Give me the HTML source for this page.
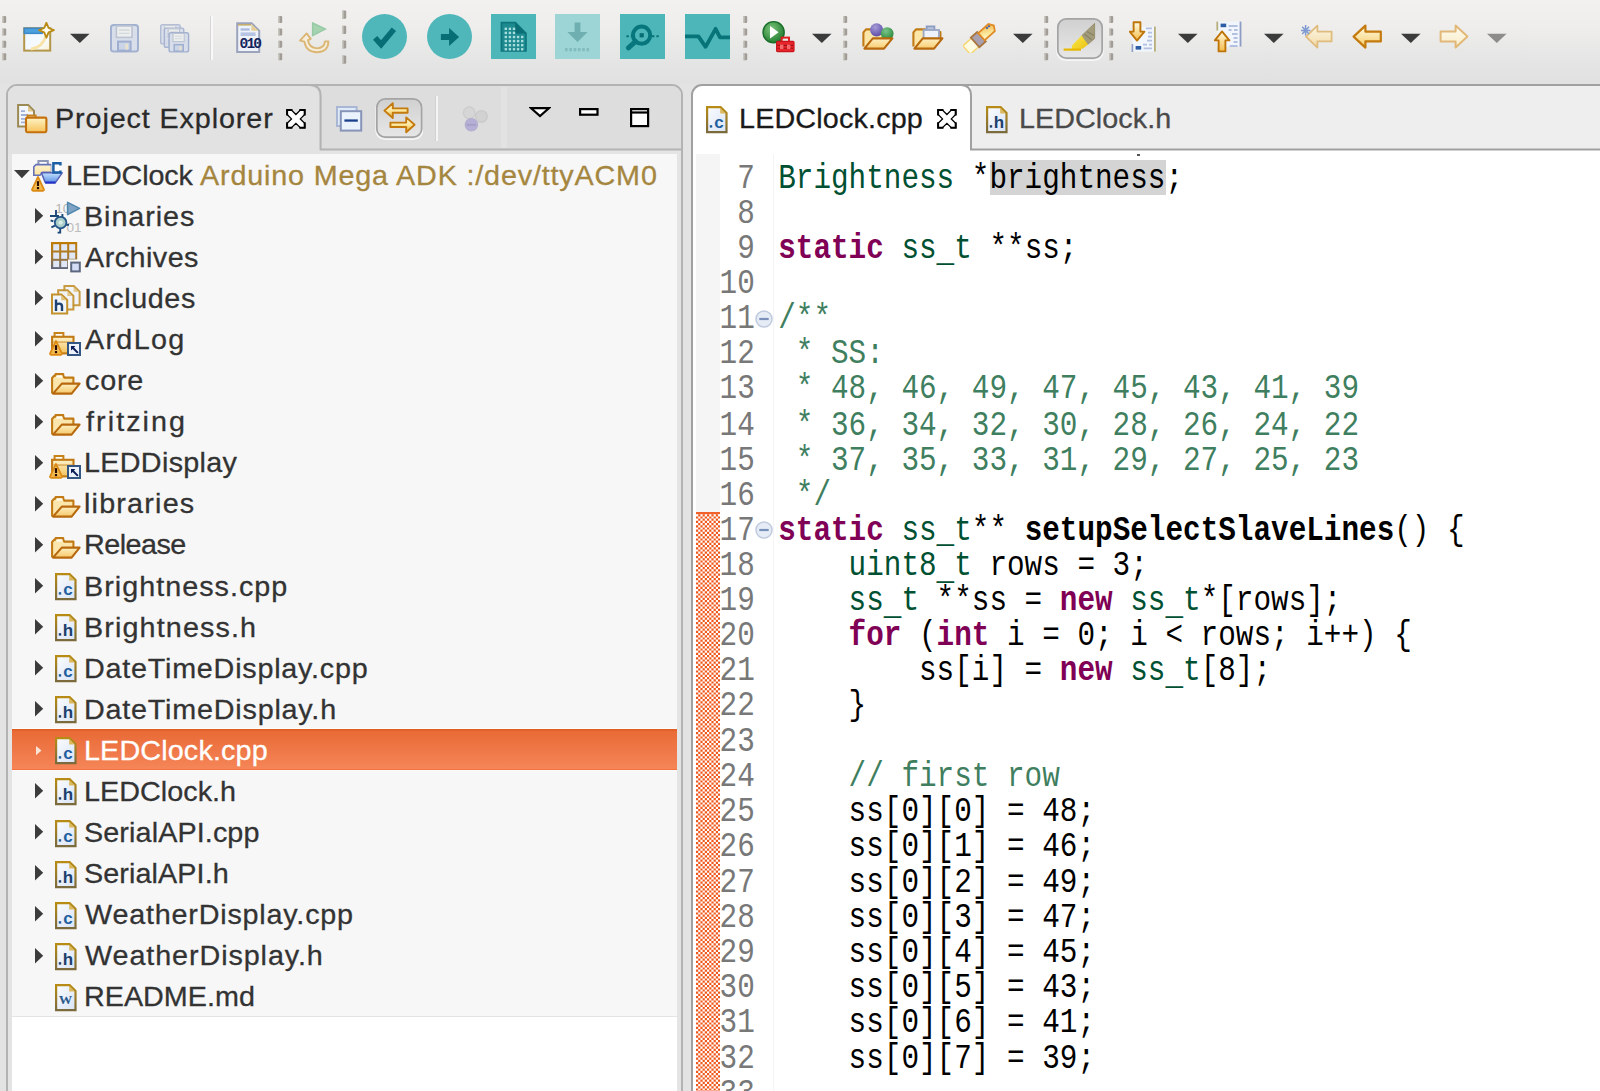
<!DOCTYPE html>
<html><head><meta charset="utf-8"><title>Eclipse</title>
<style>
html,body{margin:0;padding:0}
html{width:1600px;height:1091px;overflow:hidden}
body{width:1600px;height:1091px;overflow:hidden;position:relative;background:#e3e3e3;font-family:"Liberation Sans",sans-serif}
.abs,svg,.t{position:absolute}
.t{font-family:"Liberation Sans",sans-serif;font-size:27.5px;line-height:1;white-space:pre;transform-origin:0 0;transform:scaleX(1.045);-webkit-text-stroke:.28px}
#toolbar{position:absolute;left:-20px;top:-20px;width:1640px;height:104px;background:linear-gradient(#f2f1f0 0,#f2f1f0 22px,#efeeed 45px,#e9e9e8 65px,#e4e4e4 85px,#e1e1e1 104px)}
.code{position:absolute;font-family:"Liberation Mono",monospace;font-size:29.333px;line-height:30.085px;white-space:pre;transform-origin:0 0;transform:scaleY(1.17);color:#000}
.k{color:#7f0055;font-weight:bold}
.ty{color:#005032}
.c{color:#3f7f5f}
.f{font-weight:bold}
.ln{color:#787878}
.u{position:relative;top:2.7px}
#wrap{position:absolute;left:0;top:0;width:1600px;height:1091px;background:#e3e3e3;overflow:hidden}
#in{position:absolute;left:0;top:0;width:1600px;height:1091px}
</style></head><body><div id="wrap"><div id="in">

<div id="toolbar"></div>
<svg style="left:2.00px;top:0.00px" width="5" height="84" viewBox="0 0 5 84" ><rect x="0" y="16" width="4.2" height="7" rx="1" fill="#a19d96"/><rect x="0" y="16" width="1.6" height="7" fill="#c9c6c0"/><rect x="0" y="28.4" width="4.2" height="7" rx="1" fill="#a19d96"/><rect x="0" y="28.4" width="1.6" height="7" fill="#c9c6c0"/><rect x="0" y="40.8" width="4.2" height="7" rx="1" fill="#a19d96"/><rect x="0" y="40.8" width="1.6" height="7" fill="#c9c6c0"/><rect x="0" y="53.2" width="4.2" height="7" rx="1" fill="#a19d96"/><rect x="0" y="53.2" width="1.6" height="7" fill="#c9c6c0"/></svg>
<svg style="left:278.00px;top:0.00px" width="5" height="84" viewBox="0 0 5 84" ><rect x="0" y="16" width="4.2" height="7" rx="1" fill="#a19d96"/><rect x="0" y="16" width="1.6" height="7" fill="#c9c6c0"/><rect x="0" y="28.4" width="4.2" height="7" rx="1" fill="#a19d96"/><rect x="0" y="28.4" width="1.6" height="7" fill="#c9c6c0"/><rect x="0" y="40.8" width="4.2" height="7" rx="1" fill="#a19d96"/><rect x="0" y="40.8" width="1.6" height="7" fill="#c9c6c0"/><rect x="0" y="53.2" width="4.2" height="7" rx="1" fill="#a19d96"/><rect x="0" y="53.2" width="1.6" height="7" fill="#c9c6c0"/></svg>
<svg style="left:743.00px;top:0.00px" width="5" height="84" viewBox="0 0 5 84" ><rect x="0" y="16" width="4.2" height="7" rx="1" fill="#a19d96"/><rect x="0" y="16" width="1.6" height="7" fill="#c9c6c0"/><rect x="0" y="28.4" width="4.2" height="7" rx="1" fill="#a19d96"/><rect x="0" y="28.4" width="1.6" height="7" fill="#c9c6c0"/><rect x="0" y="40.8" width="4.2" height="7" rx="1" fill="#a19d96"/><rect x="0" y="40.8" width="1.6" height="7" fill="#c9c6c0"/><rect x="0" y="53.2" width="4.2" height="7" rx="1" fill="#a19d96"/><rect x="0" y="53.2" width="1.6" height="7" fill="#c9c6c0"/></svg>
<svg style="left:843.00px;top:0.00px" width="5" height="84" viewBox="0 0 5 84" ><rect x="0" y="16" width="4.2" height="7" rx="1" fill="#a19d96"/><rect x="0" y="16" width="1.6" height="7" fill="#c9c6c0"/><rect x="0" y="28.4" width="4.2" height="7" rx="1" fill="#a19d96"/><rect x="0" y="28.4" width="1.6" height="7" fill="#c9c6c0"/><rect x="0" y="40.8" width="4.2" height="7" rx="1" fill="#a19d96"/><rect x="0" y="40.8" width="1.6" height="7" fill="#c9c6c0"/><rect x="0" y="53.2" width="4.2" height="7" rx="1" fill="#a19d96"/><rect x="0" y="53.2" width="1.6" height="7" fill="#c9c6c0"/></svg>
<svg style="left:1044.00px;top:0.00px" width="5" height="84" viewBox="0 0 5 84" ><rect x="0" y="16" width="4.2" height="7" rx="1" fill="#a19d96"/><rect x="0" y="16" width="1.6" height="7" fill="#c9c6c0"/><rect x="0" y="28.4" width="4.2" height="7" rx="1" fill="#a19d96"/><rect x="0" y="28.4" width="1.6" height="7" fill="#c9c6c0"/><rect x="0" y="40.8" width="4.2" height="7" rx="1" fill="#a19d96"/><rect x="0" y="40.8" width="1.6" height="7" fill="#c9c6c0"/><rect x="0" y="53.2" width="4.2" height="7" rx="1" fill="#a19d96"/><rect x="0" y="53.2" width="1.6" height="7" fill="#c9c6c0"/></svg>
<svg style="left:1109.00px;top:0.00px" width="5" height="84" viewBox="0 0 5 84" ><rect x="0" y="16" width="4.2" height="7" rx="1" fill="#a19d96"/><rect x="0" y="16" width="1.6" height="7" fill="#c9c6c0"/><rect x="0" y="28.4" width="4.2" height="7" rx="1" fill="#a19d96"/><rect x="0" y="28.4" width="1.6" height="7" fill="#c9c6c0"/><rect x="0" y="40.8" width="4.2" height="7" rx="1" fill="#a19d96"/><rect x="0" y="40.8" width="1.6" height="7" fill="#c9c6c0"/><rect x="0" y="53.2" width="4.2" height="7" rx="1" fill="#a19d96"/><rect x="0" y="53.2" width="1.6" height="7" fill="#c9c6c0"/></svg>
<svg style="left:342.00px;top:0.00px" width="5" height="84" viewBox="0 0 5 84" ><rect x="0" y="10.6" width="4.2" height="8.2" rx="1" fill="#a19d96"/><rect x="0" y="10.6" width="1.6" height="8.2" fill="#c9c6c0"/><rect x="0" y="25.8" width="4.2" height="8.2" rx="1" fill="#a19d96"/><rect x="0" y="25.8" width="1.6" height="8.2" fill="#c9c6c0"/><rect x="0" y="40.4" width="4.2" height="8.2" rx="1" fill="#a19d96"/><rect x="0" y="40.4" width="1.6" height="8.2" fill="#c9c6c0"/><rect x="0" y="55.6" width="4.2" height="8.2" rx="1" fill="#a19d96"/><rect x="0" y="55.6" width="1.6" height="8.2" fill="#c9c6c0"/></svg>
<svg style="left:22.00px;top:22.00px" width="33" height="31" viewBox="0 0 33 31" ><defs><linearGradient id="g1" x1="0" y1="0" x2="1" y2="1"><stop offset="0" stop-color="#eef6ff"/><stop offset=".7" stop-color="#f6fbff"/><stop offset="1" stop-color="#fdf0c8"/></linearGradient></defs><rect x="2.2" y="6.2" width="26" height="22.4" fill="url(#g1)" stroke="#b3964a" stroke-width="2"/><rect x="2.2" y="6.2" width="18" height="5.2" fill="#4aa0dc" stroke="#3a86c8" stroke-width="1.4"/><path d="M9 27 Q20 26 24 14" fill="none" stroke="#f8e4a8" stroke-width="3"/><path d="M24.4 0.8 L26.6 6 L31.8 8.2 L26.6 10.4 L24.4 15.6 L22.2 10.4 L17 8.2 L22.2 6 Z" fill="#fffdf0" stroke="#b98a14" stroke-width="1.9" stroke-linejoin="round"/></svg>
<svg style="left:70.00px;top:33.00px" width="20" height="11" viewBox="0 0 20 11" ><path d="M0 .8 H19.6 L9.8 10 Z" fill="#3b3b3b"/></svg>
<svg style="left:109.00px;top:23.00px" width="32" height="30" viewBox="0 0 32 30" ><g transform="translate(1,1) scale(1.0)" opacity="1.0"><rect x="1" y="1" width="27" height="26.6" rx="2.6" fill="#d8deea" stroke="#a3b1d0" stroke-width="2"/><rect x="6.4" y="2" width="15.6" height="11.4" fill="#ecefee" stroke="#bcc4d2" stroke-width="1.6"/><path d="M9 6 H19.4 M9 9.4 H19.4" stroke="#d3d8dc" stroke-width="1.4"/><rect x="8" y="17.6" width="12.6" height="9" fill="#ccd5e6" stroke="#9eadd0" stroke-width="2"/><rect x="15.4" y="19.6" width="2.6" height="6" fill="#e9e2cc"/></g></svg>
<svg style="left:159.00px;top:23.00px" width="33" height="31" viewBox="0 0 33 31" ><g transform="translate(1,1) scale(0.72)" opacity="0.8"><rect x="1" y="1" width="27" height="26.6" rx="2.6" fill="#d8deea" stroke="#a3b1d0" stroke-width="2"/><rect x="6.4" y="2" width="15.6" height="11.4" fill="#ecefee" stroke="#bcc4d2" stroke-width="1.6"/><path d="M9 6 H19.4 M9 9.4 H19.4" stroke="#d3d8dc" stroke-width="1.4"/><rect x="8" y="17.6" width="12.6" height="9" fill="#ccd5e6" stroke="#9eadd0" stroke-width="2"/><rect x="15.4" y="19.6" width="2.6" height="6" fill="#e9e2cc"/></g><g transform="translate(4.6,4.4) scale(0.72)" opacity="0.9"><rect x="1" y="1" width="27" height="26.6" rx="2.6" fill="#d8deea" stroke="#a3b1d0" stroke-width="2"/><rect x="6.4" y="2" width="15.6" height="11.4" fill="#ecefee" stroke="#bcc4d2" stroke-width="1.6"/><path d="M9 6 H19.4 M9 9.4 H19.4" stroke="#d3d8dc" stroke-width="1.4"/><rect x="8" y="17.6" width="12.6" height="9" fill="#ccd5e6" stroke="#9eadd0" stroke-width="2"/><rect x="15.4" y="19.6" width="2.6" height="6" fill="#e9e2cc"/></g><g transform="translate(9.4,9) scale(0.72)" opacity="1.0"><rect x="1" y="1" width="27" height="26.6" rx="2.6" fill="#d8deea" stroke="#a3b1d0" stroke-width="2"/><rect x="6.4" y="2" width="15.6" height="11.4" fill="#ecefee" stroke="#bcc4d2" stroke-width="1.6"/><path d="M9 6 H19.4 M9 9.4 H19.4" stroke="#d3d8dc" stroke-width="1.4"/><rect x="8" y="17.6" width="12.6" height="9" fill="#ccd5e6" stroke="#9eadd0" stroke-width="2"/><rect x="15.4" y="19.6" width="2.6" height="6" fill="#e9e2cc"/></g></svg>
<div class="abs" style="left:210px;top:16px;width:1.2px;height:44px;background:#d6d6d6;"></div>
<div class="abs" style="left:211.2px;top:16px;width:2px;height:44px;background:#f8f8f8;"></div>
<svg style="left:236.00px;top:22.00px" width="28" height="32" viewBox="0 0 28 32" ><path d="M1.2 1.2 H15.6 L23.2 8.6 V30 H1.2 Z" fill="#eef2fa" stroke="#9ba4bc" stroke-width="2"/><path d="M2 2 H15 V3.6 H2Z" fill="#c4ad6c"/><path d="M15.4 2 V8.8 H22.4 Z" fill="#e6cf94"/><rect x="4.6" y="6.4" width="9" height="2.2" fill="#a9b8dc"/><rect x="4.6" y="10.4" width="15" height="3.6" fill="#b7c3e2"/><text x="3.6" y="26.4" font-family="Liberation Mono" font-weight="bold" font-size="14.6" letter-spacing="-1.9" fill="#14245c">010</text></svg>
<svg style="left:298.00px;top:21.00px" width="33" height="33" viewBox="0 0 33 33" ><path d="M14.6 2 L27.4 8 L14.6 14.6 Z" fill="#a5d3b0" stroke="#97c9a4" stroke-width="1.4"/><path d="M2 19.6 L8.6 12.4 L12.8 17.8 L10 19.2 Q11 27 19 27.4 Q26.4 27 27 20.4 L30.4 20.4 Q30.4 30.6 19 31.2 Q8 31 6.4 20.6 Z" fill="#f5eedc" stroke="#dcb674" stroke-width="1.9" stroke-linejoin="round"/></svg>
<svg style="left:361.00px;top:12.50px" width="47" height="47" viewBox="0 0 47 47" ><circle cx="23.5" cy="23.5" r="22.5" fill="#4fb7ba"/><g transform="translate(23.5,23.5)"><path d="M-9.4 1.4 L-3.4 8 L9.4 -7.2" fill="none" stroke="#066e74" stroke-width="5.6"/></g></svg>
<svg style="left:425.50px;top:12.50px" width="47" height="47" viewBox="0 0 47 47" ><circle cx="23.5" cy="23.5" r="22.5" fill="#4fb7ba"/><g transform="translate(23.5,23.5)"><path d="M-8.6 -2.6 H-0.4 V-8.6 L9.6 0.4 L-0.4 9.4 V3.4 H-8.6 Z" fill="#066e74"/></g></svg>
<svg style="left:491.00px;top:13.50px" width="45" height="45" viewBox="0 0 45 45" ><rect width="45" height="45" fill="#4db6b9"/><path d="M10.4 8.6 H24.4 L35 19.4 V37 H10.4 Z" fill="#1d8a8f" stroke="#0d767c" stroke-width="1.6"/><path d="M24.2 8.8 V19.6 H34.8 Z" fill="#0a6e74"/><rect x="13.6" y="13.6" width="2.4" height="2.4" fill="#a6dcdc"/><rect x="17.7" y="13.6" width="2.4" height="2.4" fill="#a6dcdc"/><rect x="21.8" y="13.6" width="2.4" height="2.4" fill="#a6dcdc"/><rect x="13.6" y="17.7" width="2.4" height="2.4" fill="#a6dcdc"/><rect x="17.7" y="17.7" width="2.4" height="2.4" fill="#a6dcdc"/><rect x="21.8" y="17.7" width="2.4" height="2.4" fill="#a6dcdc"/><rect x="13.6" y="21.8" width="2.4" height="2.4" fill="#a6dcdc"/><rect x="17.7" y="21.8" width="2.4" height="2.4" fill="#a6dcdc"/><rect x="21.8" y="21.8" width="2.4" height="2.4" fill="#a6dcdc"/><rect x="25.9" y="21.8" width="2.4" height="2.4" fill="#a6dcdc"/><rect x="30.0" y="21.8" width="2.4" height="2.4" fill="#a6dcdc"/><rect x="13.6" y="25.9" width="2.4" height="2.4" fill="#a6dcdc"/><rect x="17.7" y="25.9" width="2.4" height="2.4" fill="#a6dcdc"/><rect x="21.8" y="25.9" width="2.4" height="2.4" fill="#a6dcdc"/><rect x="25.9" y="25.9" width="2.4" height="2.4" fill="#a6dcdc"/><rect x="30.0" y="25.9" width="2.4" height="2.4" fill="#a6dcdc"/><rect x="13.6" y="30.0" width="2.4" height="2.4" fill="#a6dcdc"/><rect x="17.7" y="30.0" width="2.4" height="2.4" fill="#a6dcdc"/><rect x="21.8" y="30.0" width="2.4" height="2.4" fill="#a6dcdc"/><rect x="25.9" y="30.0" width="2.4" height="2.4" fill="#a6dcdc"/><rect x="30.0" y="30.0" width="2.4" height="2.4" fill="#a6dcdc"/><rect x="13.6" y="34.1" width="2.4" height="2.4" fill="#a6dcdc"/><rect x="17.7" y="34.1" width="2.4" height="2.4" fill="#a6dcdc"/><rect x="21.8" y="34.1" width="2.4" height="2.4" fill="#a6dcdc"/><rect x="25.9" y="34.1" width="2.4" height="2.4" fill="#a6dcdc"/><rect x="30.0" y="34.1" width="2.4" height="2.4" fill="#a6dcdc"/></svg>
<svg style="left:555.40px;top:13.50px" width="45" height="45" viewBox="0 0 45 45" ><rect width="45" height="45" fill="#9dd4d5"/><path d="M19.6 8.4 H25.4 V18 H32.6 L22.5 28 L12.4 18 H19.6 Z" fill="#6fafb2"/><path d="M10 35.6 H35.4" stroke="#82bcbf" stroke-width="3.4" stroke-dasharray="2.6 1.7"/></svg>
<svg style="left:620.00px;top:13.50px" width="45" height="45" viewBox="0 0 45 45" ><rect width="45" height="45" fill="#4db6b9"/><circle cx="21.6" cy="21.2" r="8.6" fill="none" stroke="#07777d" stroke-width="4"/><rect x="19.6" y="19.2" width="4.2" height="4.2" fill="#066e74"/><path d="M15.6 27.4 L8.4 33.8" stroke="#07777d" stroke-width="5" stroke-linecap="round"/><path d="M6.4 22.2 H11.6 M32 22.2 H40" stroke="#0a7379" stroke-width="2" stroke-dasharray="2.4 2"/></svg>
<svg style="left:684.70px;top:13.50px" width="45" height="45" viewBox="0 0 45 45" ><rect width="45" height="45" fill="#4db6b9"/><path d="M0 22.4 H13.4 L20.6 32.8 L30.6 14.8 L35 23.4 H45" fill="none" stroke="#07747a" stroke-width="3.8" stroke-linejoin="round"/></svg>
<svg style="left:761.00px;top:20.00px" width="35" height="33" viewBox="0 0 35 33" ><defs><radialGradient id="g2" cx=".4" cy=".35" r=".7"><stop offset="0" stop-color="#7cc47c"/><stop offset="1" stop-color="#1c7a2c"/></radialGradient></defs><circle cx="12.6" cy="12.2" r="10.6" fill="url(#g2)" stroke="#1a6e2a" stroke-width="1.4"/><path d="M9 6 L17.6 12.2 L9 18.4 Z" fill="#fff"/><rect x="20.6" y="17.6" width="7.4" height="4.4" fill="none" stroke="#e02020" stroke-width="2"/><rect x="15.6" y="21.4" width="17.4" height="10.2" rx="1" fill="#e8242a" stroke="#c8141c" stroke-width="1.2"/><path d="M16.6 25.4 H32 M16.6 28.2 H32" stroke="#a01018" stroke-width="1.1"/><rect x="19" y="24.6" width="3.4" height="4.4" fill="#f46a6a"/><rect x="26" y="24.6" width="3.4" height="4.4" fill="#f46a6a"/></svg>
<svg style="left:812.00px;top:33.00px" width="20" height="11" viewBox="0 0 20 11" ><path d="M0 .8 H19.6 L9.8 10 Z" fill="#3b3b3b"/></svg>
<svg style="left:861.50px;top:22.00px" width="34" height="30" viewBox="0 0 34 30" ><defs><linearGradient id="g5" x1="0" y1="0" x2="0" y2="1"><stop offset="0" stop-color="#fdf0c4"/><stop offset="1" stop-color="#f8cc70"/></linearGradient></defs><path d="M1.4 24.6 V10.4 L4 7.4 H13 L15.4 10 H28.4 V17" fill="#fbe6a8" stroke="#c27a14" stroke-width="2.1" stroke-linejoin="round"/><defs><radialGradient id="g3" cx=".4" cy=".3" r=".7"><stop offset="0" stop-color="#a79cd8"/><stop offset="1" stop-color="#5f4fa8"/></radialGradient><radialGradient id="g4" cx=".4" cy=".3" r=".7"><stop offset="0" stop-color="#7cc48c"/><stop offset="1" stop-color="#2c8a3c"/></radialGradient></defs><circle cx="14.6" cy="7.8" r="6.6" fill="url(#g3)"/><circle cx="25.2" cy="11.6" r="6.4" fill="url(#g4)"/><path d="M2.4 26.6 L10.8 16.4 H30.4 L22 26.6 Z" fill="url(#g5)" stroke="#b8690e" stroke-width="2.1" stroke-linejoin="round"/></svg>
<svg style="left:912.00px;top:22.00px" width="34" height="30" viewBox="0 0 34 30" ><defs><linearGradient id="g6" x1="0" y1="0" x2="0" y2="1"><stop offset="0" stop-color="#fdf0c4"/><stop offset="1" stop-color="#f8cc70"/></linearGradient></defs><path d="M1.4 24.6 V10.4 L4 7.4 H13 L15.4 10 H28.4 V17" fill="#fbe6a8" stroke="#c27a14" stroke-width="2.1" stroke-linejoin="round"/><path d="M14.6 8 V4.4 H22.4 V8" fill="#b7c3dc" stroke="#8c9cc0" stroke-width="1.8"/><rect x="11.6" y="8" width="15.4" height="9.6" fill="#eef2fc" stroke="#9aa6c4" stroke-width="1.8"/><path d="M2.4 26.6 L10.8 16.4 H30.4 L22 26.6 Z" fill="url(#g6)" stroke="#b8690e" stroke-width="2.1" stroke-linejoin="round"/></svg>
<svg style="left:962.50px;top:22.00px" width="35" height="31" viewBox="0 0 35 31" ><defs><linearGradient id="g7" x1="0" y1="1" x2="1" y2="0"><stop offset="0" stop-color="#fffce0"/><stop offset=".35" stop-color="#fbe89c"/><stop offset="1" stop-color="#f2b04a"/></linearGradient></defs><g transform="rotate(-42 17 16)"><rect x="-1" y="10.4" width="12.6" height="11.2" fill="#fffbe0" stroke="#f6d672" stroke-width="1.4"/><rect x="10.4" y="9.6" width="8.6" height="12.8" fill="#a9a0b0" stroke="#a8753c" stroke-width="1.8"/><path d="M19 11.2 H32.6 L35.6 16 L32.6 20.8 H19 Z" fill="url(#g7)" stroke="#e08a24" stroke-width="1.8"/><rect x="28" y="12.4" width="1.8" height="1.8" fill="#2450b4"/><rect x="30.6" y="12.4" width="1.8" height="1.8" fill="#2450b4"/></g></svg>
<svg style="left:1013.00px;top:33.00px" width="20" height="11" viewBox="0 0 20 11" ><path d="M0 .8 H19.6 L9.8 10 Z" fill="#3b3b3b"/></svg>
<svg style="left:1055.50px;top:16.60px" width="48" height="44" viewBox="0 0 48 44" ><defs><linearGradient id="g8" x1="0" y1="0" x2="0" y2="1"><stop offset="0" stop-color="#d0d0d0"/><stop offset=".5" stop-color="#dcdcdc"/><stop offset="1" stop-color="#e6e6e6"/></linearGradient></defs><rect x="1" y="2.2" width="46" height="41" rx="9" fill="none" stroke="#f6f6f6" stroke-width="1.6"/><rect x="1.8" y="1.8" width="44.4" height="39.4" rx="8.5" fill="url(#g8)" stroke="#a4a4a4" stroke-width="1.8"/></svg>
<svg style="left:1063.00px;top:22.00px" width="34" height="31" viewBox="0 0 34 31" ><defs><linearGradient id="g9" x1="0" y1="0" x2="1" y2="1"><stop offset="0" stop-color="#fbe94a"/><stop offset="1" stop-color="#eac010"/></linearGradient></defs><path d="M19 13.4 L31.6 1.4 V16.6 L24.6 22.4 Z" fill="#a39c7c" stroke="#98906c" stroke-width="1"/><path d="M24 9.6 L31 13.4 M21.4 12 L28.6 17.8" stroke="#8a8464" stroke-width="1.2"/><path d="M18.6 13.6 L25 22.6 L20 26.6 L8.6 28.4 L9 23.6 Z" fill="url(#g9)"/><path d="M0.6 27.6 H18" stroke="#e8b800" stroke-width="2.2"/></svg>
<svg style="left:1128.50px;top:21.00px" width="29" height="33" viewBox="0 0 29 33" ><defs><linearGradient id="g10" x1="0" y1="0" x2="0" y2="1"><stop offset="0" stop-color="#fffbe4"/><stop offset="1" stop-color="#f4bc48"/></linearGradient></defs><rect x="3.6" y="5.6" width="22" height="25" fill="#f1f5fc"/><rect x="25" y="5.6" width="1.8" height="25" fill="#b7ae7a"/><rect x="2.6" y="23" width="1.6" height="8" fill="#8c9cc4"/><rect x="6.6" y="25" width="5.6" height="3.6" fill="#2c5ca4"/><path d="M17 7.4 H23 M19 11.6 H23 M19 15.6 H23 M18 19.6 H23 M14 23.6 H18 M20 23.6 H23 M14.6 27.4 H23" stroke="#b4c0e0" stroke-width="1.8"/><path d="M4.6 1.2 H11.4 V10.6 H15.4 L8 19.6 L.8 10.6 H4.6 Z" fill="url(#g10)" stroke="#bf7408" stroke-width="1.9" stroke-linejoin="round"/></svg>
<svg style="left:1177.50px;top:33.00px" width="20" height="11" viewBox="0 0 20 11" ><path d="M0 .8 H19.6 L9.8 10 Z" fill="#3b3b3b"/></svg>
<svg style="left:1214.00px;top:21.00px" width="29" height="33" viewBox="0 0 29 33" ><defs><linearGradient id="g11" x1="0" y1="0" x2="0" y2="1"><stop offset="0" stop-color="#fffbe4"/><stop offset="1" stop-color="#f4bc48"/></linearGradient></defs><rect x="3" y="0.6" width="24" height="25" fill="#f1f5fc"/><rect x="2.4" y="0.6" width="1.8" height="9" fill="#b7ae7a"/><rect x="25.6" y="0.6" width="1.8" height="25" fill="#8c9cc4"/><rect x="6.6" y="2.6" width="5.6" height="3.6" fill="#2c5ca4"/><path d="M14.6 5 H23.6 M14.6 9 H17.6 M20 9 H23.6 M18 13 H23.6 M19.6 17 H23.6 M19.6 21 H23.6 M15.6 25 H23.6" stroke="#b4c0e0" stroke-width="1.8"/><path d="M4.6 30.4 H11.4 V19.4 H15.4 L8 10.4 L.8 19.4 H4.6 Z" fill="url(#g11)" stroke="#bf7408" stroke-width="1.9" stroke-linejoin="round"/></svg>
<svg style="left:1263.50px;top:33.00px" width="20" height="11" viewBox="0 0 20 11" ><path d="M0 .8 H19.6 L9.8 10 Z" fill="#3b3b3b"/></svg>
<svg style="left:1299.50px;top:24.00px" width="34" height="26" viewBox="0 0 34 26" ><defs><linearGradient id="g12" x1="0" y1="0" x2="0" y2="1"><stop offset="0" stop-color="#fdf8e6"/><stop offset="1" stop-color="#f2d8a4"/></linearGradient></defs><path d="M6 12.6 L17.4 1.6 V7.6 H31.6 V17.4 H17.4 V23.6 Z" fill="url(#g12)" stroke="#e0bc7c" stroke-width="1.8" stroke-linejoin="round"/><path d="M5.6 1 V11.6 M1 6.4 H10.4 M2.2 2.8 L9 10 M9 2.8 L2.2 10" stroke="#7f9ad0" stroke-width="1.5"/></svg>
<svg style="left:1351.50px;top:24.00px" width="31" height="26" viewBox="0 0 31 26" ><defs><linearGradient id="g13" x1="0" y1="0" x2="0" y2="1"><stop offset="0" stop-color="#fffbe4"/><stop offset="1" stop-color="#f6cc68"/></linearGradient></defs><path d="M1.6 12.6 L13.4 1.6 V7.6 H28.8 V17.4 H13.4 V23.6 Z" fill="url(#g13)" stroke="#c47a0c" stroke-width="2.2" stroke-linejoin="round"/></svg>
<svg style="left:1400.50px;top:33.00px" width="20" height="11" viewBox="0 0 20 11" ><path d="M0 .8 H19.6 L9.8 10 Z" fill="#3b3b3b"/></svg>
<svg style="left:1438.50px;top:24.00px" width="31" height="26" viewBox="0 0 31 26" ><defs><linearGradient id="g14" x1="0" y1="0" x2="0" y2="1"><stop offset="0" stop-color="#fefaee"/><stop offset="1" stop-color="#f8ecc8"/></linearGradient></defs><path d="M28.4 12.6 L16.6 1.6 V7.6 H1.6 V17.4 H16.6 V23.6 Z" fill="url(#g14)" stroke="#e2b878" stroke-width="2" stroke-linejoin="round"/></svg>
<svg style="left:1486.50px;top:33.00px" width="20" height="11" viewBox="0 0 20 11" ><path d="M0 .8 H19.6 L9.8 10 Z" fill="#8e8c88"/></svg>
<div class="abs" style="left:6px;top:84px;width:673px;height:1020px;border:2px solid #b3b3b3;border-radius:11px 11px 0 0;background:#e4e4e4"></div>
<div class="abs" style="left:8px;top:86px;width:673px;height:62.5px;background:#dddddd;border-radius:9px 9px 0 0"></div>
<div class="abs" style="left:8px;top:86px;width:311px;height:68px;background:#e2e2e2;border-radius:9px 10px 0 0"></div>
<svg style="left:300.00px;top:84.00px" width="383" height="68" viewBox="0 0 383 68" ><path d="M0 1 H10 Q20.6 1 20.6 12 V65.5 H381" fill="none" stroke="#b3b3b3" stroke-width="2"/></svg>
<div class="abs" style="left:501px;top:87px;width:6px;height:61px;background:#e2e2e2;"></div>
<div class="abs" style="left:12px;top:154.4px;width:665px;height:862.1px;background:#f7f7f7;"></div>
<div class="abs" style="left:12px;top:1016.5px;width:665px;height:80px;background:#ffffff;"></div>
<svg style="left:17.00px;top:103.50px" width="31" height="30" viewBox="0 0 31 30" ><defs><linearGradient id="g15" x1="0" y1="0" x2="0" y2="1"><stop offset="0" stop-color="#fef4c8"/><stop offset="1" stop-color="#f7c25a"/></linearGradient></defs><path d="M1.1 1.1 H11.2 L17 7 V22.4 H1.1 Z" fill="#f3f6fc" stroke="#9c8a54" stroke-width="2"/><path d="M11 2 V7.4 H16.4 Z" fill="#e4c98c"/><path d="M4 7.2 H8 M4 11 H11 M4 14.8 H8 M4 18.4 H8" stroke="#9fb2d8" stroke-width="1.8"/><path d="M10.6 13.4 V11.6 H18.6 V13.4" fill="#fff" stroke="#c8821c" stroke-width="2"/><rect x="9" y="13.6" width="20.4" height="14.6" rx="1.4" fill="url(#g15)" stroke="#c4700c" stroke-width="2.1"/></svg>
<span class="t" id="tab1" style="left:54.91px;top:105.32px;color:#2a2a2a;letter-spacing:0.849px;">Project Explorer</span>
<svg style="left:285.50px;top:109.00px" width="20" height="20" viewBox="0 0 20 20" ><path d="M1.10 1.10 L5.50 1.10 L9.90 5.50 L14.30 1.10 L18.70 1.10 L18.70 5.50 L14.30 9.90 L18.70 14.30 L18.70 18.70 L14.30 18.70 L9.90 14.30 L5.50 18.70 L1.10 18.70 L1.10 14.30 L5.50 9.90 L1.10 5.50 Z" fill="#fff" stroke="#000" stroke-width="1.3" stroke-linejoin="miter"/><path d="M5.50 1.10 H1.10 V5.50 M14.30 1.10 H18.70 V5.50 M14.30 18.70 H18.70 V14.30 M5.50 18.70 H1.10 V14.30 " fill="none" stroke="#000" stroke-width="2.0" stroke-linecap="square"/></svg>
<svg style="left:336.00px;top:105.50px" width="27" height="26" viewBox="0 0 27 26" ><rect x="1" y="1" width="19.6" height="19" fill="#dfeaf8" stroke="#a9b6d4" stroke-width="2"/><rect x="4.8" y="5.2" width="20.4" height="19.4" fill="#eaf3fd" stroke="#8794b8" stroke-width="2"/><rect x="8.4" y="13.4" width="13.4" height="2.3" fill="#1c3f8c"/></svg>
<svg style="left:374.50px;top:97.00px" width="48.5" height="43" viewBox="0 0 48.5 43" ><defs><linearGradient id="g16" x1="0" y1="0" x2="0" y2="1"><stop offset="0" stop-color="#d0d0d0"/><stop offset=".5" stop-color="#dcdcdc"/><stop offset="1" stop-color="#e6e6e6"/></linearGradient></defs><rect x="1" y="2.2" width="46.5" height="40" rx="9" fill="none" stroke="#f6f6f6" stroke-width="1.6"/><rect x="1.8" y="1.8" width="44.9" height="38.4" rx="8.5" fill="url(#g16)" stroke="#a4a4a4" stroke-width="1.8"/></svg>
<svg style="left:383.00px;top:101.50px" width="33" height="32" viewBox="0 0 33 32" ><defs><linearGradient id="g17" x1="0" y1="0" x2="0" y2="1"><stop offset="0" stop-color="#fff8d8"/><stop offset=".5" stop-color="#fce8a0"/><stop offset="1" stop-color="#e8a82c"/></linearGradient></defs><path d="M1.4 8.6 L9.8 1.2 V6.4 H24.6 V10.8 H9.8 V16 Z" fill="url(#g17)" stroke="#c47a0c" stroke-width="1.9" stroke-linejoin="round"/><path d="M31.6 22.8 L23.2 15.4 V20.6 H7.4 V25 H23.2 V30.2 Z" fill="url(#g17)" stroke="#c47a0c" stroke-width="1.9" stroke-linejoin="round"/></svg>
<div class="abs" style="left:434.5px;top:96px;width:1.2px;height:45px;background:#d2d2d2;"></div>
<div class="abs" style="left:435.7px;top:96px;width:2.3px;height:45px;background:#f4f4f4;"></div>
<svg style="left:461.50px;top:106.00px" width="27" height="26" viewBox="0 0 27 26" ><circle cx="7.2" cy="6.8" r="5.8" fill="#d6d6d6" stroke="#cdcdcd" stroke-width="1.4"/><circle cx="19.4" cy="10.4" r="5.8" fill="#d2d2d2" stroke="#cacaca" stroke-width="1.4"/><circle cx="9.4" cy="18.8" r="6.2" fill="#b7b0d6" stroke="#b4aed0" stroke-width="1.2"/><rect x="4.6" y="17.8" width="9.6" height="2" fill="#a69fc8"/></svg>
<svg style="left:529.00px;top:106.00px" width="22" height="12" viewBox="0 0 22 12" ><path d="M2.2 2.2 H19.8 L11 10 Z" fill="#fff" stroke="#000" stroke-width="2.2" stroke-linejoin="miter"/></svg>
<svg style="left:578.00px;top:106.50px" width="22" height="10" viewBox="0 0 22 10" ><rect x="2.1" y="2.1" width="17.4" height="5.6" fill="#fff" stroke="#000" stroke-width="2.2"/></svg>
<svg style="left:629.00px;top:106.50px" width="22" height="22" viewBox="0 0 22 22" ><rect x="2.1" y="2.1" width="17" height="17" fill="#fff" stroke="#000" stroke-width="2.2"/><rect x="2" y="4.4" width="17" height="2.2" fill="#000"/></svg>
<svg style="left:13.50px;top:170.00px" width="16" height="9" viewBox="0 0 16 9" ><path d="M0 0 H15.8 L7.9 8.2 Z" fill="#3c3c3c"/></svg>
<svg style="left:31.00px;top:160.40px" width="34" height="27" viewBox="0 0 34 27" ><defs><linearGradient id="g18" x1="0" y1="0" x2="0" y2="1"><stop offset="0" stop-color="#c4e2fd"/><stop offset="1" stop-color="#5f92e6"/></linearGradient><linearGradient id="g19" x1="0" y1="0" x2="0" y2="1"><stop offset="0" stop-color="#fdf3cf"/><stop offset="1" stop-color="#fbe19c"/></linearGradient></defs><path d="M7.4 4.8 V1 H16.8 V4.8" fill="#fbfbfb" stroke="#8b97b4" stroke-width="2"/><path d="M2.8 15.2 V6.8 L5 4.6 H20.6 V12.4 H11.4 L9 15.2 Z" fill="url(#g19)" stroke="#6672b8" stroke-width="1.6"/><rect x="20.4" y="1.6" width="10" height="12.4" fill="#fff"/><path d="M10.4 12.8 H31.2 L24.6 22.4 H14.2 Z" fill="url(#g18)" stroke="#5862b8" stroke-width="1.5" stroke-linejoin="round"/><path d="M14.2 22.6 H24.6" stroke="#2334c8" stroke-width="2.2"/><path d="M29.4 5.6 V3.2 H22.4 V12.6 H29.4 V10.6" fill="none" stroke="#1c5fa4" stroke-width="2.5"/></svg><svg style="left:30.60px;top:176.00px" width="14" height="16" viewBox="0 0 14 16" ><defs><linearGradient id="g20" x1="0" y1="0" x2="0" y2="1"><stop offset="0" stop-color="#f8d98c"/><stop offset="1" stop-color="#f0b03c"/></linearGradient></defs><path d="M7 1 L13 13.6 Q13 14.8 12 14.8 H2 Q1 14.8 1 13.6 Z" fill="url(#g20)" stroke="#dc8a14" stroke-width="1.8" stroke-linejoin="round"/><rect x="5.9" y="5.2" width="2.2" height="4.8" fill="#2a0a00"/><rect x="5.9" y="11" width="2.2" height="2.2" fill="#2a0a00"/></svg>
<span class="t" id="r0" style="left:65.91px;top:161.82px;color:#333333;letter-spacing:-0.123px;">LEDClock</span>
<span class="t" id="r0b" style="left:200.00px;top:161.82px;color:#a5863f;letter-spacing:0.792px;">Arduino Mega ADK :/dev/ttyACM0</span>
<svg style="left:35.00px;top:208.27px" width="9" height="16" viewBox="0 0 9 16" ><path d="M0 0 L8.2 7.8 L0 15.6 Z" fill="#3c3c3c"/></svg>
<svg style="left:49.00px;top:201.07px" width="32" height="33" viewBox="0 0 32 33" ><text x="6.2" y="11.6" font-family="Liberation Sans" font-size="13.6" fill="#b4b4b4">10</text><text x="17.4" y="31" font-family="Liberation Sans" font-size="13.6" fill="#bcbcbc">01</text><path d="M18.6 1.4 L30.6 7.4 L18.6 13.6 Z" fill="#7ea3c4" stroke="#4f86ad" stroke-width="1.6" stroke-linejoin="round"/><path d="M1 15 H10 M7 9 V16 M13.4 13 V16 M1.6 19.4 L4.4 20.4 M2.4 26.4 L6 24.6 M8.6 31.6 H11.2 V27.6 M16.6 23.8 H20" stroke="#1c4878" stroke-width="1.9" fill="none"/><circle cx="11.6" cy="21.6" r="5.8" fill="#a9cdc8" stroke="#23558a" stroke-width="1.8"/><circle cx="11.6" cy="21.6" r="2.2" fill="#d9ece6"/></svg>
<span class="t" id="r1" style="left:83.66px;top:202.89px;color:#333333;letter-spacing:0.879px;">Binaries</span>
<svg style="left:35.00px;top:249.34px" width="9" height="16" viewBox="0 0 9 16" ><path d="M0 0 L8.2 7.8 L0 15.6 Z" fill="#3c3c3c"/></svg>
<svg style="left:51.00px;top:242.14px" width="30" height="31" viewBox="0 0 30 31" ><defs><linearGradient id="g21" x1="0" y1="0" x2="0" y2="1"><stop offset="0" stop-color="#c07a04"/><stop offset=".55" stop-color="#a87a30"/><stop offset="1" stop-color="#5d6680"/></linearGradient></defs><rect x="0" y="0" width="26.2" height="27" fill="url(#g21)"/><rect x="2.2" y="2.2" width="6" height="6.3" fill="#e0e8f8"/><rect x="10.2" y="2.2" width="6" height="6.3" fill="#e0e8f8"/><rect x="18.2" y="2.2" width="6" height="6.3" fill="#e0e8f8"/><rect x="2.2" y="10.5" width="6" height="6.3" fill="#e0e8f8"/><rect x="10.2" y="10.5" width="6" height="6.3" fill="#e0e8f8"/><rect x="18.2" y="10.5" width="6" height="6.3" fill="#e0e8f8"/><rect x="2.2" y="18.8" width="6" height="6.3" fill="#e0e8f8"/><rect x="10.2" y="18.8" width="6" height="6.3" fill="#e0e8f8"/><rect x="17" y="17.4" width="10" height="10.4" fill="#f7f7f7"/><rect x="20.2" y="20.6" width="8.6" height="8.8" fill="#d3ddf5" stroke="#5c6880" stroke-width="2"/></svg>
<span class="t" id="r2" style="left:85.00px;top:243.96px;color:#333333;letter-spacing:0.448px;">Archives</span>
<svg style="left:35.00px;top:290.41px" width="9" height="16" viewBox="0 0 9 16" ><path d="M0 0 L8.2 7.8 L0 15.6 Z" fill="#3c3c3c"/></svg>
<svg style="left:51.00px;top:285.01px" width="30" height="31" viewBox="0 0 30 31" ><g transform="translate(12.4,0)" opacity="0.9"><path d="M1 1 H10.4 L16.2 6.6 V20.2 H1 Z" fill="#f1f5fc" stroke="#c3922e" stroke-width="2"/><path d="M10.2 1.8 V6.8 H15.4 Z" fill="#e0c27c"/></g><g transform="translate(6.2,4.2)" opacity="0.95"><path d="M1 1 H10.4 L16.2 6.6 V20.2 H1 Z" fill="#f1f5fc" stroke="#c3922e" stroke-width="2"/><path d="M10.2 1.8 V6.8 H15.4 Z" fill="#e0c27c"/></g><g transform="translate(0,8.4)" opacity="1.0"><path d="M1 1 H10.4 L16.2 6.6 V20.2 H1 Z" fill="#f1f5fc" stroke="#c3922e" stroke-width="2"/><path d="M10.2 1.8 V6.8 H15.4 Z" fill="#e0c27c"/></g><path d="M5 14.4 V26 M5 20.6 Q5.4 18.6 8.2 18.6 Q11 18.6 11 21.4 V26" fill="none" stroke="#1d4173" stroke-width="2.4"/></svg>
<span class="t" id="r3" style="left:83.66px;top:285.03px;color:#333333;letter-spacing:0.581px;">Includes</span>
<svg style="left:35.00px;top:331.48px" width="9" height="16" viewBox="0 0 9 16" ><path d="M0 0 L8.2 7.8 L0 15.6 Z" fill="#3c3c3c"/></svg>
<svg style="left:51.00px;top:332.08px" width="24" height="23" viewBox="0 0 24 23" ><defs><linearGradient id="g22" x1="0" y1="0" x2="0" y2="1"><stop offset="0" stop-color="#fdf2cc"/><stop offset="1" stop-color="#f4c25c"/></linearGradient></defs><path d="M3.6 4.6 V1.1 H12.4 V4.6" fill="#fffdf6" stroke="#c8821c" stroke-width="2"/><rect x="1.1" y="4.8" width="21.4" height="16.6" fill="url(#g22)" stroke="#c27a14" stroke-width="2.1"/><rect x="2.4" y="9.2" width="19" height="1.8" fill="#c98a2c" opacity=".55"/></svg><svg style="left:48.60px;top:340.08px" width="14" height="16" viewBox="0 0 14 16" ><defs><linearGradient id="g23" x1="0" y1="0" x2="0" y2="1"><stop offset="0" stop-color="#f8d98c"/><stop offset="1" stop-color="#f0b03c"/></linearGradient></defs><path d="M7 1 L13 13.6 Q13 14.8 12 14.8 H2 Q1 14.8 1 13.6 Z" fill="url(#g23)" stroke="#dc8a14" stroke-width="1.8" stroke-linejoin="round"/><rect x="5.9" y="5.2" width="2.2" height="4.8" fill="#2a0a00"/><rect x="5.9" y="11" width="2.2" height="2.2" fill="#2a0a00"/></svg><svg style="left:66.60px;top:341.88px" width="14" height="14" viewBox="0 0 14 14" ><rect x="1" y="1" width="12" height="12" fill="#eef3fb" stroke="#345682" stroke-width="2"/><path d="M4 4 H8.4 L7 5.6 L11.6 10.2 L10.2 11.6 L5.6 7 L4 8.4 Z" fill="#0c1e58"/></svg>
<span class="t" id="r4" style="left:85.00px;top:326.10px;color:#333333;letter-spacing:1.260px;">ArdLog</span>
<svg style="left:35.00px;top:372.55px" width="9" height="16" viewBox="0 0 9 16" ><path d="M0 0 L8.2 7.8 L0 15.6 Z" fill="#3c3c3c"/></svg>
<svg style="left:51.00px;top:373.15px" width="30" height="22" viewBox="0 0 30 22" ><defs><linearGradient id="g24" x1="0" y1="0" x2="0" y2="1"><stop offset="0" stop-color="#fdf0c4"/><stop offset="1" stop-color="#f6c868"/></linearGradient></defs><path d="M1.1 20.5 V5 L3.4 2.6 H4.6 V1.1 H12.2 V2.6 L13.4 4.6 H22.4 V10.4" fill="#fbe7ad" stroke="#c27a14" stroke-width="2.1" stroke-linejoin="round"/><rect x="5.4" y="2.4" width="6" height="2.2" fill="#fffdf4"/><path d="M2 20.6 L10.8 10.6 H28.6 L20.6 20.6 Z" fill="url(#g24)" stroke="#b8690e" stroke-width="2.1" stroke-linejoin="round"/></svg>
<span class="t" id="r5" style="left:84.70px;top:367.17px;color:#333333;letter-spacing:0.769px;">core</span>
<svg style="left:35.00px;top:413.62px" width="9" height="16" viewBox="0 0 9 16" ><path d="M0 0 L8.2 7.8 L0 15.6 Z" fill="#3c3c3c"/></svg>
<svg style="left:51.00px;top:414.22px" width="30" height="22" viewBox="0 0 30 22" ><defs><linearGradient id="g25" x1="0" y1="0" x2="0" y2="1"><stop offset="0" stop-color="#fdf0c4"/><stop offset="1" stop-color="#f6c868"/></linearGradient></defs><path d="M1.1 20.5 V5 L3.4 2.6 H4.6 V1.1 H12.2 V2.6 L13.4 4.6 H22.4 V10.4" fill="#fbe7ad" stroke="#c27a14" stroke-width="2.1" stroke-linejoin="round"/><rect x="5.4" y="2.4" width="6" height="2.2" fill="#fffdf4"/><path d="M2 20.6 L10.8 10.6 H28.6 L20.6 20.6 Z" fill="url(#g25)" stroke="#b8690e" stroke-width="2.1" stroke-linejoin="round"/></svg>
<span class="t" id="r6" style="left:85.50px;top:408.24px;color:#333333;letter-spacing:1.975px;">fritzing</span>
<svg style="left:35.00px;top:454.69px" width="9" height="16" viewBox="0 0 9 16" ><path d="M0 0 L8.2 7.8 L0 15.6 Z" fill="#3c3c3c"/></svg>
<svg style="left:51.00px;top:455.29px" width="24" height="23" viewBox="0 0 24 23" ><defs><linearGradient id="g26" x1="0" y1="0" x2="0" y2="1"><stop offset="0" stop-color="#fdf2cc"/><stop offset="1" stop-color="#f4c25c"/></linearGradient></defs><path d="M3.6 4.6 V1.1 H12.4 V4.6" fill="#fffdf6" stroke="#c8821c" stroke-width="2"/><rect x="1.1" y="4.8" width="21.4" height="16.6" fill="url(#g26)" stroke="#c27a14" stroke-width="2.1"/><rect x="2.4" y="9.2" width="19" height="1.8" fill="#c98a2c" opacity=".55"/></svg><svg style="left:48.60px;top:463.29px" width="14" height="16" viewBox="0 0 14 16" ><defs><linearGradient id="g27" x1="0" y1="0" x2="0" y2="1"><stop offset="0" stop-color="#f8d98c"/><stop offset="1" stop-color="#f0b03c"/></linearGradient></defs><path d="M7 1 L13 13.6 Q13 14.8 12 14.8 H2 Q1 14.8 1 13.6 Z" fill="url(#g27)" stroke="#dc8a14" stroke-width="1.8" stroke-linejoin="round"/><rect x="5.9" y="5.2" width="2.2" height="4.8" fill="#2a0a00"/><rect x="5.9" y="11" width="2.2" height="2.2" fill="#2a0a00"/></svg><svg style="left:66.60px;top:465.09px" width="14" height="14" viewBox="0 0 14 14" ><rect x="1" y="1" width="12" height="12" fill="#eef3fb" stroke="#345682" stroke-width="2"/><path d="M4 4 H8.4 L7 5.6 L11.6 10.2 L10.2 11.6 L5.6 7 L4 8.4 Z" fill="#0c1e58"/></svg>
<span class="t" id="r7" style="left:83.66px;top:449.31px;color:#333333;letter-spacing:0.304px;">LEDDisplay</span>
<svg style="left:35.00px;top:495.76px" width="9" height="16" viewBox="0 0 9 16" ><path d="M0 0 L8.2 7.8 L0 15.6 Z" fill="#3c3c3c"/></svg>
<svg style="left:51.00px;top:496.36px" width="30" height="22" viewBox="0 0 30 22" ><defs><linearGradient id="g28" x1="0" y1="0" x2="0" y2="1"><stop offset="0" stop-color="#fdf0c4"/><stop offset="1" stop-color="#f6c868"/></linearGradient></defs><path d="M1.1 20.5 V5 L3.4 2.6 H4.6 V1.1 H12.2 V2.6 L13.4 4.6 H22.4 V10.4" fill="#fbe7ad" stroke="#c27a14" stroke-width="2.1" stroke-linejoin="round"/><rect x="5.4" y="2.4" width="6" height="2.2" fill="#fffdf4"/><path d="M2 20.6 L10.8 10.6 H28.6 L20.6 20.6 Z" fill="url(#g28)" stroke="#b8690e" stroke-width="2.1" stroke-linejoin="round"/></svg>
<span class="t" id="r8" style="left:83.66px;top:490.38px;color:#333333;letter-spacing:1.144px;">libraries</span>
<svg style="left:35.00px;top:536.83px" width="9" height="16" viewBox="0 0 9 16" ><path d="M0 0 L8.2 7.8 L0 15.6 Z" fill="#3c3c3c"/></svg>
<svg style="left:51.00px;top:537.43px" width="30" height="22" viewBox="0 0 30 22" ><defs><linearGradient id="g29" x1="0" y1="0" x2="0" y2="1"><stop offset="0" stop-color="#fdf0c4"/><stop offset="1" stop-color="#f6c868"/></linearGradient></defs><path d="M1.1 20.5 V5 L3.4 2.6 H4.6 V1.1 H12.2 V2.6 L13.4 4.6 H22.4 V10.4" fill="#fbe7ad" stroke="#c27a14" stroke-width="2.1" stroke-linejoin="round"/><rect x="5.4" y="2.4" width="6" height="2.2" fill="#fffdf4"/><path d="M2 20.6 L10.8 10.6 H28.6 L20.6 20.6 Z" fill="url(#g29)" stroke="#b8690e" stroke-width="2.1" stroke-linejoin="round"/></svg>
<span class="t" id="r9" style="left:83.66px;top:531.45px;color:#333333;letter-spacing:-0.504px;">Release</span>
<svg style="left:35.00px;top:577.90px" width="9" height="16" viewBox="0 0 9 16" ><path d="M0 0 L8.2 7.8 L0 15.6 Z" fill="#3c3c3c"/></svg>
<svg style="left:55.00px;top:573.10px" width="22" height="28" viewBox="0 0 22 28" ><defs><linearGradient id="g30" x1="0" y1="0" x2="0" y2="1"><stop offset="0" stop-color="#b88c14"/><stop offset="1" stop-color="#7b6a3c"/></linearGradient><linearGradient id="g31" x1="0" y1="0" x2="1" y2="1"><stop offset="0" stop-color="#fbfcff"/><stop offset="1" stop-color="#d9e4f6"/></linearGradient></defs><path d="M1.1 1.1 H14.6 L20.5 7 V26.1 H1.1 Z" fill="url(#g31)" stroke="url(#g30)" stroke-width="2.2" stroke-linejoin="miter"/><path d="M14.2 2 V7.6 H19.8 Z" fill="#dcb85c"/><rect x="3.8" y="19.2" width="2.4" height="2.4" fill="#1f5f9f"/><text x="13" y="21.6" text-anchor="middle" font-family="Liberation Sans" font-weight="bold" font-size="17" fill="#1f5f9f">c</text></svg>
<span class="t" id="r10" style="left:83.66px;top:572.52px;color:#333333;letter-spacing:0.971px;">Brightness.cpp</span>
<svg style="left:35.00px;top:618.97px" width="9" height="16" viewBox="0 0 9 16" ><path d="M0 0 L8.2 7.8 L0 15.6 Z" fill="#3c3c3c"/></svg>
<svg style="left:55.00px;top:614.17px" width="22" height="28" viewBox="0 0 22 28" ><defs><linearGradient id="g32" x1="0" y1="0" x2="0" y2="1"><stop offset="0" stop-color="#b88c14"/><stop offset="1" stop-color="#7b6a3c"/></linearGradient><linearGradient id="g33" x1="0" y1="0" x2="1" y2="1"><stop offset="0" stop-color="#fbfcff"/><stop offset="1" stop-color="#d9e4f6"/></linearGradient></defs><path d="M1.1 1.1 H14.6 L20.5 7 V26.1 H1.1 Z" fill="url(#g33)" stroke="url(#g32)" stroke-width="2.2" stroke-linejoin="miter"/><path d="M14.2 2 V7.6 H19.8 Z" fill="#dcb85c"/><rect x="3.8" y="19.2" width="2.4" height="2.4" fill="#1c3f6e"/><text x="13" y="21.6" text-anchor="middle" font-family="Liberation Sans" font-weight="bold" font-size="17" fill="#1c3f6e">h</text></svg>
<span class="t" id="r11" style="left:83.66px;top:613.59px;color:#333333;letter-spacing:1.070px;">Brightness.h</span>
<svg style="left:35.00px;top:660.04px" width="9" height="16" viewBox="0 0 9 16" ><path d="M0 0 L8.2 7.8 L0 15.6 Z" fill="#3c3c3c"/></svg>
<svg style="left:55.00px;top:655.24px" width="22" height="28" viewBox="0 0 22 28" ><defs><linearGradient id="g34" x1="0" y1="0" x2="0" y2="1"><stop offset="0" stop-color="#b88c14"/><stop offset="1" stop-color="#7b6a3c"/></linearGradient><linearGradient id="g35" x1="0" y1="0" x2="1" y2="1"><stop offset="0" stop-color="#fbfcff"/><stop offset="1" stop-color="#d9e4f6"/></linearGradient></defs><path d="M1.1 1.1 H14.6 L20.5 7 V26.1 H1.1 Z" fill="url(#g35)" stroke="url(#g34)" stroke-width="2.2" stroke-linejoin="miter"/><path d="M14.2 2 V7.6 H19.8 Z" fill="#dcb85c"/><rect x="3.8" y="19.2" width="2.4" height="2.4" fill="#1f5f9f"/><text x="13" y="21.6" text-anchor="middle" font-family="Liberation Sans" font-weight="bold" font-size="17" fill="#1f5f9f">c</text></svg>
<span class="t" id="r12" style="left:83.66px;top:654.66px;color:#333333;letter-spacing:0.732px;">DateTimeDisplay.cpp</span>
<svg style="left:35.00px;top:701.11px" width="9" height="16" viewBox="0 0 9 16" ><path d="M0 0 L8.2 7.8 L0 15.6 Z" fill="#3c3c3c"/></svg>
<svg style="left:55.00px;top:696.31px" width="22" height="28" viewBox="0 0 22 28" ><defs><linearGradient id="g36" x1="0" y1="0" x2="0" y2="1"><stop offset="0" stop-color="#b88c14"/><stop offset="1" stop-color="#7b6a3c"/></linearGradient><linearGradient id="g37" x1="0" y1="0" x2="1" y2="1"><stop offset="0" stop-color="#fbfcff"/><stop offset="1" stop-color="#d9e4f6"/></linearGradient></defs><path d="M1.1 1.1 H14.6 L20.5 7 V26.1 H1.1 Z" fill="url(#g37)" stroke="url(#g36)" stroke-width="2.2" stroke-linejoin="miter"/><path d="M14.2 2 V7.6 H19.8 Z" fill="#dcb85c"/><rect x="3.8" y="19.2" width="2.4" height="2.4" fill="#1c3f6e"/><text x="13" y="21.6" text-anchor="middle" font-family="Liberation Sans" font-weight="bold" font-size="17" fill="#1c3f6e">h</text></svg>
<span class="t" id="r13" style="left:83.66px;top:695.73px;color:#333333;letter-spacing:0.752px;">DateTimeDisplay.h</span>
<div class="abs" style="left:12px;top:729.38px;width:665px;height:41.07px;background:linear-gradient(#df5c24 0,#e2602a 1.4px,#e96b36 2.4px,#ef7747 50%,#f58557 39.6px,#f37240 40.2px,#f37240 100%);box-shadow:0 -1px 0 #fcfcfc,0 1px 0 #fbfbfb"></div>
<svg style="left:36.00px;top:745.68px" width="6" height="10" viewBox="0 0 6 10" ><path d="M0 0 L5.5 4.6 L0 9.2 Z" fill="#fbe3d6"/></svg>
<svg style="left:55.00px;top:737.38px" width="22" height="28" viewBox="0 0 22 28" ><defs><linearGradient id="g38" x1="0" y1="0" x2="0" y2="1"><stop offset="0" stop-color="#b88c14"/><stop offset="1" stop-color="#7b6a3c"/></linearGradient><linearGradient id="g39" x1="0" y1="0" x2="1" y2="1"><stop offset="0" stop-color="#fbfcff"/><stop offset="1" stop-color="#d9e4f6"/></linearGradient></defs><path d="M1.1 1.1 H14.6 L20.5 7 V26.1 H1.1 Z" fill="url(#g39)" stroke="url(#g38)" stroke-width="2.2" stroke-linejoin="miter"/><path d="M14.2 2 V7.6 H19.8 Z" fill="#dcb85c"/><rect x="3.8" y="19.2" width="2.4" height="2.4" fill="#1f5f9f"/><text x="13" y="21.6" text-anchor="middle" font-family="Liberation Sans" font-weight="bold" font-size="17" fill="#1f5f9f">c</text></svg>
<span class="t" id="r14" style="left:83.66px;top:736.80px;color:#ffffff;letter-spacing:0.135px;">LEDClock.cpp</span>
<svg style="left:35.00px;top:783.25px" width="9" height="16" viewBox="0 0 9 16" ><path d="M0 0 L8.2 7.8 L0 15.6 Z" fill="#3c3c3c"/></svg>
<svg style="left:55.00px;top:778.45px" width="22" height="28" viewBox="0 0 22 28" ><defs><linearGradient id="g40" x1="0" y1="0" x2="0" y2="1"><stop offset="0" stop-color="#b88c14"/><stop offset="1" stop-color="#7b6a3c"/></linearGradient><linearGradient id="g41" x1="0" y1="0" x2="1" y2="1"><stop offset="0" stop-color="#fbfcff"/><stop offset="1" stop-color="#d9e4f6"/></linearGradient></defs><path d="M1.1 1.1 H14.6 L20.5 7 V26.1 H1.1 Z" fill="url(#g41)" stroke="url(#g40)" stroke-width="2.2" stroke-linejoin="miter"/><path d="M14.2 2 V7.6 H19.8 Z" fill="#dcb85c"/><rect x="3.8" y="19.2" width="2.4" height="2.4" fill="#1c3f6e"/><text x="13" y="21.6" text-anchor="middle" font-family="Liberation Sans" font-weight="bold" font-size="17" fill="#1c3f6e">h</text></svg>
<span class="t" id="r15" style="left:83.66px;top:777.87px;color:#333333;letter-spacing:0.038px;">LEDClock.h</span>
<svg style="left:35.00px;top:824.32px" width="9" height="16" viewBox="0 0 9 16" ><path d="M0 0 L8.2 7.8 L0 15.6 Z" fill="#3c3c3c"/></svg>
<svg style="left:55.00px;top:819.52px" width="22" height="28" viewBox="0 0 22 28" ><defs><linearGradient id="g42" x1="0" y1="0" x2="0" y2="1"><stop offset="0" stop-color="#b88c14"/><stop offset="1" stop-color="#7b6a3c"/></linearGradient><linearGradient id="g43" x1="0" y1="0" x2="1" y2="1"><stop offset="0" stop-color="#fbfcff"/><stop offset="1" stop-color="#d9e4f6"/></linearGradient></defs><path d="M1.1 1.1 H14.6 L20.5 7 V26.1 H1.1 Z" fill="url(#g43)" stroke="url(#g42)" stroke-width="2.2" stroke-linejoin="miter"/><path d="M14.2 2 V7.6 H19.8 Z" fill="#dcb85c"/><rect x="3.8" y="19.2" width="2.4" height="2.4" fill="#1f5f9f"/><text x="13" y="21.6" text-anchor="middle" font-family="Liberation Sans" font-weight="bold" font-size="17" fill="#1f5f9f">c</text></svg>
<span class="t" id="r16" style="left:83.95px;top:818.94px;color:#333333;letter-spacing:0.106px;">SerialAPI.cpp</span>
<svg style="left:35.00px;top:865.39px" width="9" height="16" viewBox="0 0 9 16" ><path d="M0 0 L8.2 7.8 L0 15.6 Z" fill="#3c3c3c"/></svg>
<svg style="left:55.00px;top:860.59px" width="22" height="28" viewBox="0 0 22 28" ><defs><linearGradient id="g44" x1="0" y1="0" x2="0" y2="1"><stop offset="0" stop-color="#b88c14"/><stop offset="1" stop-color="#7b6a3c"/></linearGradient><linearGradient id="g45" x1="0" y1="0" x2="1" y2="1"><stop offset="0" stop-color="#fbfcff"/><stop offset="1" stop-color="#d9e4f6"/></linearGradient></defs><path d="M1.1 1.1 H14.6 L20.5 7 V26.1 H1.1 Z" fill="url(#g45)" stroke="url(#g44)" stroke-width="2.2" stroke-linejoin="miter"/><path d="M14.2 2 V7.6 H19.8 Z" fill="#dcb85c"/><rect x="3.8" y="19.2" width="2.4" height="2.4" fill="#1c3f6e"/><text x="13" y="21.6" text-anchor="middle" font-family="Liberation Sans" font-weight="bold" font-size="17" fill="#1c3f6e">h</text></svg>
<span class="t" id="r17" style="left:83.95px;top:860.01px;color:#333333;letter-spacing:0.089px;">SerialAPI.h</span>
<svg style="left:35.00px;top:906.46px" width="9" height="16" viewBox="0 0 9 16" ><path d="M0 0 L8.2 7.8 L0 15.6 Z" fill="#3c3c3c"/></svg>
<svg style="left:55.00px;top:901.66px" width="22" height="28" viewBox="0 0 22 28" ><defs><linearGradient id="g46" x1="0" y1="0" x2="0" y2="1"><stop offset="0" stop-color="#b88c14"/><stop offset="1" stop-color="#7b6a3c"/></linearGradient><linearGradient id="g47" x1="0" y1="0" x2="1" y2="1"><stop offset="0" stop-color="#fbfcff"/><stop offset="1" stop-color="#d9e4f6"/></linearGradient></defs><path d="M1.1 1.1 H14.6 L20.5 7 V26.1 H1.1 Z" fill="url(#g47)" stroke="url(#g46)" stroke-width="2.2" stroke-linejoin="miter"/><path d="M14.2 2 V7.6 H19.8 Z" fill="#dcb85c"/><rect x="3.8" y="19.2" width="2.4" height="2.4" fill="#1f5f9f"/><text x="13" y="21.6" text-anchor="middle" font-family="Liberation Sans" font-weight="bold" font-size="17" fill="#1f5f9f">c</text></svg>
<span class="t" id="r18" style="left:85.00px;top:901.08px;color:#333333;letter-spacing:0.764px;">WeatherDisplay.cpp</span>
<svg style="left:35.00px;top:947.53px" width="9" height="16" viewBox="0 0 9 16" ><path d="M0 0 L8.2 7.8 L0 15.6 Z" fill="#3c3c3c"/></svg>
<svg style="left:55.00px;top:942.73px" width="22" height="28" viewBox="0 0 22 28" ><defs><linearGradient id="g48" x1="0" y1="0" x2="0" y2="1"><stop offset="0" stop-color="#b88c14"/><stop offset="1" stop-color="#7b6a3c"/></linearGradient><linearGradient id="g49" x1="0" y1="0" x2="1" y2="1"><stop offset="0" stop-color="#fbfcff"/><stop offset="1" stop-color="#d9e4f6"/></linearGradient></defs><path d="M1.1 1.1 H14.6 L20.5 7 V26.1 H1.1 Z" fill="url(#g49)" stroke="url(#g48)" stroke-width="2.2" stroke-linejoin="miter"/><path d="M14.2 2 V7.6 H19.8 Z" fill="#dcb85c"/><rect x="3.8" y="19.2" width="2.4" height="2.4" fill="#1c3f6e"/><text x="13" y="21.6" text-anchor="middle" font-family="Liberation Sans" font-weight="bold" font-size="17" fill="#1c3f6e">h</text></svg>
<span class="t" id="r19" style="left:85.00px;top:942.15px;color:#333333;letter-spacing:0.872px;">WeatherDisplay.h</span>
<svg style="left:55.00px;top:983.80px" width="22" height="28" viewBox="0 0 22 28" ><defs><linearGradient id="g50" x1="0" y1="0" x2="0" y2="1"><stop offset="0" stop-color="#b88c14"/><stop offset="1" stop-color="#7b6a3c"/></linearGradient><linearGradient id="g51" x1="0" y1="0" x2="1" y2="1"><stop offset="0" stop-color="#fbfcff"/><stop offset="1" stop-color="#d9e4f6"/></linearGradient></defs><path d="M1.1 1.1 H14.6 L20.5 7 V26.1 H1.1 Z" fill="url(#g51)" stroke="url(#g50)" stroke-width="2.2" stroke-linejoin="miter"/><path d="M14.2 2 V7.6 H19.8 Z" fill="#dcb85c"/><text x="10.4" y="19.6" text-anchor="middle" font-family="Liberation Serif" font-weight="bold" font-size="13.5" fill="#2a5a8c">W</text></svg>
<span class="t" id="r20" style="left:83.66px;top:983.22px;color:#333333;letter-spacing:0.006px;">README.md</span>
<div class="abs" style="left:691px;top:84px;width:930px;height:1020px;border:2px solid #a0a0a0;border-radius:11px 0 0 0;background:#ffffff"></div>
<div class="abs" style="left:971px;top:86px;width:629px;height:63px;background:#eeeeee;"></div>
<svg style="left:950.00px;top:84.00px" width="650" height="68" viewBox="0 0 650 68" ><path d="M0 1 H11 Q21 1 21 12 V65.5 H650" fill="none" stroke="#a0a0a0" stroke-width="2"/></svg>
<div class="abs" style="left:696px;top:154.4px;width:24px;height:940px;background:#f5f5f5;"></div>
<svg style="left:696.00px;top:512.00px" width="24" height="580" viewBox="0 0 24 580" ><rect width="24" height="580" fill="#fff"/><path d="M0 1.1H24" stroke="#f0622a" stroke-width="2.2"/><path d="M0 3.30H24.2 M0 7.70H24.2 M0 12.10H24.2 M0 16.50H24.2 M0 20.90H24.2 M0 25.30H24.2 M0 29.70H24.2 M0 34.10H24.2 M0 38.50H24.2 M0 42.90H24.2 M0 47.30H24.2 M0 51.70H24.2 M0 56.10H24.2 M0 60.50H24.2 M0 64.90H24.2 M0 69.30H24.2 M0 73.70H24.2 M0 78.10H24.2 M0 82.50H24.2 M0 86.90H24.2 M0 91.30H24.2 M0 95.70H24.2 M0 100.10H24.2 M0 104.50H24.2 M0 108.90H24.2 M0 113.30H24.2 M0 117.70H24.2 M0 122.10H24.2 M0 126.50H24.2 M0 130.90H24.2 M0 135.30H24.2 M0 139.70H24.2 M0 144.10H24.2 M0 148.50H24.2 M0 152.90H24.2 M0 157.30H24.2 M0 161.70H24.2 M0 166.10H24.2 M0 170.50H24.2 M0 174.90H24.2 M0 179.30H24.2 M0 183.70H24.2 M0 188.10H24.2 M0 192.50H24.2 M0 196.90H24.2 M0 201.30H24.2 M0 205.70H24.2 M0 210.10H24.2 M0 214.50H24.2 M0 218.90H24.2 M0 223.30H24.2 M0 227.70H24.2 M0 232.10H24.2 M0 236.50H24.2 M0 240.90H24.2 M0 245.30H24.2 M0 249.70H24.2 M0 254.10H24.2 M0 258.50H24.2 M0 262.90H24.2 M0 267.30H24.2 M0 271.70H24.2 M0 276.10H24.2 M0 280.50H24.2 M0 284.90H24.2 M0 289.30H24.2 M0 293.70H24.2 M0 298.10H24.2 M0 302.50H24.2 M0 306.90H24.2 M0 311.30H24.2 M0 315.70H24.2 M0 320.10H24.2 M0 324.50H24.2 M0 328.90H24.2 M0 333.30H24.2 M0 337.70H24.2 M0 342.10H24.2 M0 346.50H24.2 M0 350.90H24.2 M0 355.30H24.2 M0 359.70H24.2 M0 364.10H24.2 M0 368.50H24.2 M0 372.90H24.2 M0 377.30H24.2 M0 381.70H24.2 M0 386.10H24.2 M0 390.50H24.2 M0 394.90H24.2 M0 399.30H24.2 M0 403.70H24.2 M0 408.10H24.2 M0 412.50H24.2 M0 416.90H24.2 M0 421.30H24.2 M0 425.70H24.2 M0 430.10H24.2 M0 434.50H24.2 M0 438.90H24.2 M0 443.30H24.2 M0 447.70H24.2 M0 452.10H24.2 M0 456.50H24.2 M0 460.90H24.2 M0 465.30H24.2 M0 469.70H24.2 M0 474.10H24.2 M0 478.50H24.2 M0 482.90H24.2 M0 487.30H24.2 M0 491.70H24.2 M0 496.10H24.2 M0 500.50H24.2 M0 504.90H24.2 M0 509.30H24.2 M0 513.70H24.2 M0 518.10H24.2 M0 522.50H24.2 M0 526.90H24.2 M0 531.30H24.2 M0 535.70H24.2 M0 540.10H24.2 M0 544.50H24.2 M0 548.90H24.2 M0 553.30H24.2 M0 557.70H24.2 M0 562.10H24.2 M0 566.50H24.2 M0 570.90H24.2 M0 575.30H24.2 M0 579.70H24.2" stroke="#f0571a" stroke-width="2.2" stroke-dasharray="2.2 2.2" stroke-dashoffset="2.2"/><path d="M0 5.50H24.2 M0 9.90H24.2 M0 14.30H24.2 M0 18.70H24.2 M0 23.10H24.2 M0 27.50H24.2 M0 31.90H24.2 M0 36.30H24.2 M0 40.70H24.2 M0 45.10H24.2 M0 49.50H24.2 M0 53.90H24.2 M0 58.30H24.2 M0 62.70H24.2 M0 67.10H24.2 M0 71.50H24.2 M0 75.90H24.2 M0 80.30H24.2 M0 84.70H24.2 M0 89.10H24.2 M0 93.50H24.2 M0 97.90H24.2 M0 102.30H24.2 M0 106.70H24.2 M0 111.10H24.2 M0 115.50H24.2 M0 119.90H24.2 M0 124.30H24.2 M0 128.70H24.2 M0 133.10H24.2 M0 137.50H24.2 M0 141.90H24.2 M0 146.30H24.2 M0 150.70H24.2 M0 155.10H24.2 M0 159.50H24.2 M0 163.90H24.2 M0 168.30H24.2 M0 172.70H24.2 M0 177.10H24.2 M0 181.50H24.2 M0 185.90H24.2 M0 190.30H24.2 M0 194.70H24.2 M0 199.10H24.2 M0 203.50H24.2 M0 207.90H24.2 M0 212.30H24.2 M0 216.70H24.2 M0 221.10H24.2 M0 225.50H24.2 M0 229.90H24.2 M0 234.30H24.2 M0 238.70H24.2 M0 243.10H24.2 M0 247.50H24.2 M0 251.90H24.2 M0 256.30H24.2 M0 260.70H24.2 M0 265.10H24.2 M0 269.50H24.2 M0 273.90H24.2 M0 278.30H24.2 M0 282.70H24.2 M0 287.10H24.2 M0 291.50H24.2 M0 295.90H24.2 M0 300.30H24.2 M0 304.70H24.2 M0 309.10H24.2 M0 313.50H24.2 M0 317.90H24.2 M0 322.30H24.2 M0 326.70H24.2 M0 331.10H24.2 M0 335.50H24.2 M0 339.90H24.2 M0 344.30H24.2 M0 348.70H24.2 M0 353.10H24.2 M0 357.50H24.2 M0 361.90H24.2 M0 366.30H24.2 M0 370.70H24.2 M0 375.10H24.2 M0 379.50H24.2 M0 383.90H24.2 M0 388.30H24.2 M0 392.70H24.2 M0 397.10H24.2 M0 401.50H24.2 M0 405.90H24.2 M0 410.30H24.2 M0 414.70H24.2 M0 419.10H24.2 M0 423.50H24.2 M0 427.90H24.2 M0 432.30H24.2 M0 436.70H24.2 M0 441.10H24.2 M0 445.50H24.2 M0 449.90H24.2 M0 454.30H24.2 M0 458.70H24.2 M0 463.10H24.2 M0 467.50H24.2 M0 471.90H24.2 M0 476.30H24.2 M0 480.70H24.2 M0 485.10H24.2 M0 489.50H24.2 M0 493.90H24.2 M0 498.30H24.2 M0 502.70H24.2 M0 507.10H24.2 M0 511.50H24.2 M0 515.90H24.2 M0 520.30H24.2 M0 524.70H24.2 M0 529.10H24.2 M0 533.50H24.2 M0 537.90H24.2 M0 542.30H24.2 M0 546.70H24.2 M0 551.10H24.2 M0 555.50H24.2 M0 559.90H24.2 M0 564.30H24.2 M0 568.70H24.2 M0 573.10H24.2 M0 577.50H24.2 M0 581.90H24.2" stroke="#f0571a" stroke-width="2.2" stroke-dasharray="2.2 2.2"/></svg>
<div class="abs" style="left:773px;top:154.4px;width:1.2px;height:940px;background:#f4f4f4;"></div>
<div class="abs" style="left:1137px;top:154.4px;width:3px;height:1.4px;background:#555;"></div>
<svg style="left:706.00px;top:105.70px" width="22" height="28" viewBox="0 0 22 28" ><defs><linearGradient id="g52" x1="0" y1="0" x2="0" y2="1"><stop offset="0" stop-color="#b88c14"/><stop offset="1" stop-color="#7b6a3c"/></linearGradient><linearGradient id="g53" x1="0" y1="0" x2="1" y2="1"><stop offset="0" stop-color="#fbfcff"/><stop offset="1" stop-color="#d9e4f6"/></linearGradient></defs><path d="M1.1 1.1 H14.6 L20.5 7 V26.1 H1.1 Z" fill="url(#g53)" stroke="url(#g52)" stroke-width="2.2" stroke-linejoin="miter"/><path d="M14.2 2 V7.6 H19.8 Z" fill="#dcb85c"/><rect x="3.8" y="19.2" width="2.4" height="2.4" fill="#1f5f9f"/><text x="13" y="21.6" text-anchor="middle" font-family="Liberation Sans" font-weight="bold" font-size="17" fill="#1f5f9f">c</text></svg>
<span class="t" id="tab2" style="left:738.51px;top:105.32px;color:#1a1a1a;letter-spacing:0.148px;">LEDClock.cpp</span>
<svg style="left:937.00px;top:109.00px" width="20" height="20" viewBox="0 0 20 20" ><path d="M1.10 1.10 L5.50 1.10 L9.90 5.50 L14.30 1.10 L18.70 1.10 L18.70 5.50 L14.30 9.90 L18.70 14.30 L18.70 18.70 L14.30 18.70 L9.90 14.30 L5.50 18.70 L1.10 18.70 L1.10 14.30 L5.50 9.90 L1.10 5.50 Z" fill="none" stroke="#000" stroke-width="1.3" stroke-linejoin="miter"/><path d="M5.50 1.10 H1.10 V5.50 M14.30 1.10 H18.70 V5.50 M14.30 18.70 H18.70 V14.30 M5.50 18.70 H1.10 V14.30 " fill="none" stroke="#000" stroke-width="2.0" stroke-linecap="square"/></svg>
<svg style="left:986.00px;top:105.70px" width="22" height="28" viewBox="0 0 22 28" ><defs><linearGradient id="g54" x1="0" y1="0" x2="0" y2="1"><stop offset="0" stop-color="#b88c14"/><stop offset="1" stop-color="#7b6a3c"/></linearGradient><linearGradient id="g55" x1="0" y1="0" x2="1" y2="1"><stop offset="0" stop-color="#fbfcff"/><stop offset="1" stop-color="#d9e4f6"/></linearGradient></defs><path d="M1.1 1.1 H14.6 L20.5 7 V26.1 H1.1 Z" fill="url(#g55)" stroke="url(#g54)" stroke-width="2.2" stroke-linejoin="miter"/><path d="M14.2 2 V7.6 H19.8 Z" fill="#dcb85c"/><rect x="3.8" y="19.2" width="2.4" height="2.4" fill="#1c3f6e"/><text x="13" y="21.6" text-anchor="middle" font-family="Liberation Sans" font-weight="bold" font-size="17" fill="#1c3f6e">h</text></svg>
<span class="t" id="tab3" style="left:1018.51px;top:105.32px;color:#4a4a4a;letter-spacing:0.044px;">LEDClock.h</span>
<div class="abs" style="left:990.2px;top:160.2px;width:175.6px;height:35.1px;background:#d4d4d4;"></div>
<div class="code ln" style="left:719.6px;top:161.60px"> 7
 8
 9
10
11
12
13
14
15
16
17
18
19
20
21
22
23
24
25
26
27
28
29
30
31
32
33</div>
<div class="code" style="left:778.2px;top:161.60px"><span class="ty">Brightness</span> *brightness;

<span class="k">static</span> <span class="ty">ss<span class="u">_</span>t</span> **ss;

<span class="c">/**</span>
<span class="c"> * SS:</span>
<span class="c"> * 48, 46, 49, 47, 45, 43, 41, 39</span>
<span class="c"> * 36, 34, 32, 30, 28, 26, 24, 22</span>
<span class="c"> * 37, 35, 33, 31, 29, 27, 25, 23</span>
<span class="c"> */</span>
<span class="k">static</span> <span class="ty">ss<span class="u">_</span>t</span>** <span class="f">setupSelectSlaveLines</span>() {
    <span class="ty">uint8<span class="u">_</span>t</span> rows = 3;
    <span class="ty">ss<span class="u">_</span>t</span> **ss = <span class="k">new</span> <span class="ty">ss<span class="u">_</span>t</span>*[rows];
    <span class="k">for</span> (<span class="k">int</span> i = 0; i &lt; rows; i++) {
        ss[i] = <span class="k">new</span> <span class="ty">ss<span class="u">_</span>t</span>[8];
    }

    <span class="c">// first row</span>
    ss[0][0] = 48;
    ss[0][1] = 46;
    ss[0][2] = 49;
    ss[0][3] = 47;
    ss[0][4] = 45;
    ss[0][5] = 43;
    ss[0][6] = 41;
    ss[0][7] = 39;
</div>
<svg style="left:755.00px;top:309.60px" width="18" height="18" viewBox="0 0 18 18" ><circle cx="9" cy="9" r="8" fill="#e5ecf6" stroke="#c0cade" stroke-width="1.5"/><rect x="4.3" y="7.9" width="9.4" height="2.2" fill="#7890ba"/></svg>
<svg style="left:755.00px;top:520.80px" width="18" height="18" viewBox="0 0 18 18" ><circle cx="9" cy="9" r="8" fill="#e5ecf6" stroke="#c0cade" stroke-width="1.5"/><rect x="4.3" y="7.9" width="9.4" height="2.2" fill="#7890ba"/></svg>
</div></div></body></html>
